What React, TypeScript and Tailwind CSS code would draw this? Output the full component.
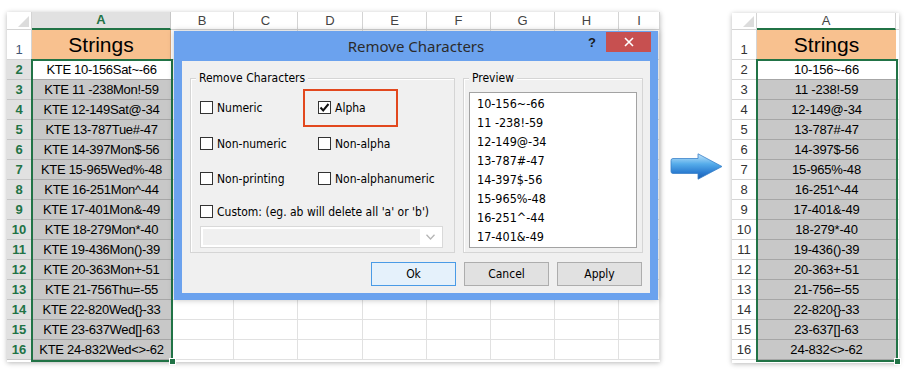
import React from 'react';

const LEFT = [
  'KTE 10-156Sat~-66',
  'KTE 11 -238Mon!-59',
  'KTE 12-149Sat@-34',
  'KTE 13-787Tue#-47',
  'KTE 14-397Mon$-56',
  'KTE 15-965Wed%-48',
  'KTE 16-251Mon^-44',
  'KTE 17-401Mon&-49',
  'KTE 18-279Mon*-40',
  'KTE 19-436Mon()-39',
  'KTE 20-363Mon+-51',
  'KTE 21-756Thu=-55',
  'KTE 22-820Wed{}-33',
  'KTE 23-637Wed[]-63',
  'KTE 24-832Wed<>-62',
];

const RIGHT = [
  '10-156~-66',
  '11 -238!-59',
  '12-149@-34',
  '13-787#-47',
  '14-397$-56',
  '15-965%-48',
  '16-251^-44',
  '17-401&-49',
  '18-279*-40',
  '19-436()-39',
  '20-363+-51',
  '21-756=-55',
  '22-820{}-33',
  '23-637[]-63',
  '24-832<>-62',
];

const PREVIEW = RIGHT.slice(0, 8);

const COLS = [
  { name: 'A', w: 'w-[139px]' },
  { name: 'B', w: 'w-[63px]' },
  { name: 'C', w: 'w-[64px]' },
  { name: 'D', w: 'w-[65px]' },
  { name: 'E', w: 'w-[64px]' },
  { name: 'F', w: 'w-[64px]' },
  { name: 'G', w: 'w-[64px]' },
  { name: 'H', w: 'w-[64px]' },
  { name: 'I', w: 'w-[41px]' },
];

const sheetFont = "font-['Liberation_Sans',sans-serif]";
const dlgFont = "font-['DejaVu_Sans_Condensed','DejaVu_Sans',sans-serif]";

const Corner: React.FC = () => (
  <div className="w-[25px] shrink-0 border-r border-b border-[#d4d4d4] bg-white flex items-end justify-end pr-[2px] pb-[2px]">
    <div className="w-0 h-0 border-l-[11px] border-l-transparent border-b-[11px] border-b-[#dcdcdc]" />
  </div>
);

const Selection: React.FC<{ className: string }> = ({ className }) => (
  <div className={`absolute pointer-events-none border-2 border-[#217346] ${className}`}>
    <div className="absolute -right-[5px] -bottom-[5px] w-[7px] h-[7px] bg-[#217346] border border-white" />
  </div>
);

const CheckBox: React.FC<{ checked?: boolean; label: string }> = ({ checked, label }) => (
  <div className="flex items-center gap-[4px] h-[13px]">
    <div className="w-[13px] h-[13px] shrink-0 border border-[#333] bg-white flex items-center justify-center">
      {checked && (
        <svg width="11" height="11" viewBox="0 0 11 11">
          <path d="M1.5 5.5 L4.2 8.4 L9.5 2" fill="none" stroke="#111" strokeWidth="2" />
        </svg>
      )}
    </div>
    <span className="text-[12px] leading-none text-black whitespace-nowrap">{label}</span>
  </div>
);

const Group: React.FC<{ title: string; className: string; children: React.ReactNode }> = ({ title, className, children }) => (
  <div className={`relative border border-[#d5d5d5] shadow-[inset_1px_1px_0_#fff] ${className}`}>
    <span className="absolute -top-[8px] left-[5px] px-[3px] bg-[#f0f0f0] text-[12px] leading-[14px] text-black">{title}</span>
    {children}
  </div>
);

const Button: React.FC<{ label: string; focused?: boolean }> = ({ label, focused }) => (
  <div
    className={`w-[85px] h-[24px] flex items-center justify-center text-[12px] text-black border ${
      focused ? 'border-[#4a9be6] bg-[#e5f1fb]' : 'border-[#adadad] bg-[#e1e1e1]'
    }`}
  >
    {label}
  </div>
);

const Dialog: React.FC = () => (
  <div className={`absolute left-[167px] top-[19px] w-[484px] h-[269px] bg-[#6ba2ee] flex flex-col shadow-[0_0_6px_rgba(0,0,0,0.25)] ${dlgFont}`}>
    <div className="relative h-[30px] shrink-0 flex items-center justify-center">
      <span className="text-[15px] text-[#2b2b2b] font-['Noto_Sans',sans-serif]">Remove Characters</span>
      <div className="absolute right-[7px] top-[1px] flex items-start">
        <span className="mr-[10px] mt-[1px] text-[13px] font-bold text-[#1a1a1a] font-['Liberation_Sans',sans-serif]">?</span>
        <div className="w-[45px] h-[20px] bg-[#c75050] flex items-center justify-center">
          <svg width="10" height="10" viewBox="0 0 10 10">
            <path d="M1 1 L9 9 M9 1 L1 9" stroke="#fff" strokeWidth="1.6" />
          </svg>
        </div>
      </div>
    </div>
    <div className="mx-[8px] h-[232px] bg-[#f0f0f0] pt-[17px] flex flex-col">
      <div className="flex gap-[8px] pl-[8px]">
        <Group title="Remove Characters" className="w-[265px] h-[175px] pl-[9px] pt-[22px]">
          <div className="absolute left-[112px] top-[10px] w-[95px] h-[38px] border-2 border-[#e2481e]" />
          <div className="grid grid-cols-[118px_1fr]">
            <CheckBox label="Numeric" />
            <CheckBox checked label="Alpha" />
          </div>
          <div className="grid grid-cols-[118px_1fr] mt-[23px]">
            <CheckBox label="Non-numeric" />
            <CheckBox label="Non-alpha" />
          </div>
          <div className="grid grid-cols-[118px_1fr] mt-[22px]">
            <CheckBox label="Non-printing" />
            <CheckBox label="Non-alphanumeric" />
          </div>
          <div className="mt-[20px]">
            <CheckBox label="Custom: (eg. ab will delete all 'a' or 'b')" />
          </div>
          <div className="mt-[8px] w-[243px] h-[22px] border border-[#d9d9d9] bg-white p-[2px] flex">
            <div className="flex-1 bg-[#f0f0f0]" />
            <div className="w-[20px] flex items-center justify-center">
              <svg width="9" height="6" viewBox="0 0 9 6">
                <path d="M0.5 0.8 L4.5 5 L8.5 0.8" fill="none" stroke="#b5b5b5" strokeWidth="1.3" />
              </svg>
            </div>
          </div>
        </Group>
        <Group title="Preview" className="w-[180px] h-[175px] pl-[5px] pt-[13px]">
          <div className="w-[168px] h-[156px] border border-[#a3a3a3] bg-white pt-[1px] pl-[7px]">
            {PREVIEW.map((p) => (
              <div key={p} className="h-[19px] leading-[19px] text-[12.5px] text-black">
                {p}
              </div>
            ))}
          </div>
        </Group>
      </div>
      <div className="mt-[9px] pr-[8px] flex justify-end gap-[8px]">
        <Button label="Ok" focused />
        <Button label="Cancel" />
        <Button label="Apply" />
      </div>
    </div>
  </div>
);

const LeftSheet: React.FC = () => (
  <div className={`relative shrink-0 ml-[7px] mt-[12px] w-[653px] bg-white shadow-[0_1px_5px_rgba(0,0,0,0.28)] ${sheetFont}`}>
    <div className="flex h-[18px]">
      <Corner />
      {COLS.map((c, i) => (
        <div
          key={c.name}
          className={`${c.w} shrink-0 flex items-center justify-center text-[13px] border-r ${
            i === 0
              ? 'bg-[#e1e1e1] text-[#217346] font-bold border-b-2 border-b-[#217346] border-r-[#c6c6c6]'
              : 'bg-white text-[#444] border-b border-[#d4d4d4]'
          }`}
        >
          {c.name}
        </div>
      ))}
    </div>
    <div className="flex h-[30px]">
      <div className="w-[25px] shrink-0 bg-white border-r border-b border-[#d4d4d4] flex items-end justify-center text-[13px] text-[#3e5575] leading-[18px]">
        1
      </div>
      {COLS.map((c, i) => (
        <div
          key={c.name}
          className={`${c.w} shrink-0 ${
            i === 0
              ? 'bg-[#f8c18f] flex items-center justify-center text-[21px] text-black border-r border-[#d9a77a]'
              : 'border-r border-b border-[#e1e1e1]'
          }`}
        >
          {i === 0 ? 'Strings' : ''}
        </div>
      ))}
    </div>
    {LEFT.map((v, r) => (
      <div key={v} className="flex h-[20px]">
        <div className="w-[25px] shrink-0 bg-[#e1e1e1] border-r border-b border-[#c6c6c6] flex items-center justify-center text-[13px] font-bold text-[#217346]">
          {r + 2}
        </div>
        {COLS.map((c, i) => (
          <div
            key={c.name}
            className={`${c.w} shrink-0 ${
              i === 0
                ? `${r === 0 ? 'bg-white' : 'bg-[#c8c8c8]'} border-b border-[#a6a6a6] flex items-center justify-center text-[13px] tracking-[-0.3px] text-black whitespace-nowrap`
                : 'border-r border-b border-[#e1e1e1]'
            }`}
          >
            {i === 0 ? v : ''}
          </div>
        ))}
      </div>
    ))}
    <div className="h-[2px]" />
    <Selection className="left-[24px] top-[47px] w-[142px] h-[303px]" />
    <Dialog />
  </div>
);

const Arrow: React.FC = () => (
  <div className="shrink-0 ml-[10px] mt-[153px]">
    <svg width="53" height="27" viewBox="0 0 53 27">
      <defs>
        <linearGradient id="arrowFill" x1="0" y1="0" x2="0" y2="1">
          <stop offset="0" stopColor="#c4e6fb" />
          <stop offset="0.4" stopColor="#55acea" />
          <stop offset="0.75" stopColor="#2a7bd0" />
          <stop offset="1" stopColor="#1d5faf" />
        </linearGradient>
      </defs>
      <path
        d="M3 5.5 H28 V0.8 L52 13.5 L28 26.2 V20.5 H3 Q1 20.5 1 18.5 V7.5 Q1 5.5 3 5.5 Z"
        fill="url(#arrowFill)"
        stroke="#3b82c9"
        strokeWidth="0.8"
      />
    </svg>
  </div>
);

const RightSheet: React.FC = () => (
  <div className={`relative shrink-0 ml-[9px] mt-[13px] w-[167px] bg-white shadow-[0_1px_5px_rgba(0,0,0,0.28)] ${sheetFont}`}>
    <div className="flex h-[17px]">
      <Corner />
      <div className="w-[139px] shrink-0 flex items-center justify-center text-[13px] text-[#444] bg-white border-r border-[#d4d4d4] border-b-2 border-b-[#217346]">
        A
      </div>
      <div className="w-[3px] shrink-0 border-b border-[#d4d4d4]" />
    </div>
    <div className="flex h-[30px]">
      <div className="w-[25px] shrink-0 bg-white border-r border-b border-[#d4d4d4] flex items-end justify-center text-[13px] text-[#333] leading-[18px]">
        1
      </div>
      <div className="w-[139px] shrink-0 bg-[#f8c18f] flex items-center justify-center text-[21px] text-black">
        Strings
      </div>
      <div className="w-[3px] shrink-0 border-b border-[#e1e1e1]" />
    </div>
    {RIGHT.map((v, r) => (
      <div key={v} className="flex h-[20px]">
        <div className="w-[25px] shrink-0 bg-white border-r border-b border-[#d4d4d4] flex items-center justify-center text-[13px] text-[#333]">
          {r + 2}
        </div>
        <div
          className={`w-[139px] shrink-0 ${
            r === 0 ? 'bg-white' : 'bg-[#c8c8c8]'
          } border-b border-[#a6a6a6] flex items-center justify-center text-[13px] tracking-[-0.2px] text-black whitespace-nowrap`}
        >
          {v}
        </div>
        <div className="w-[3px] shrink-0 border-b border-[#e1e1e1]" />
      </div>
    ))}
    <div className="h-[3px]" />
    <Selection className="left-[24px] top-[46px] w-[142px] h-[303px]" />
  </div>
);

export default function App() {
  return (
    <div className="w-[906px] h-[377px] bg-white flex items-start overflow-hidden">
      <LeftSheet />
      <Arrow />
      <RightSheet />
    </div>
  );
}
